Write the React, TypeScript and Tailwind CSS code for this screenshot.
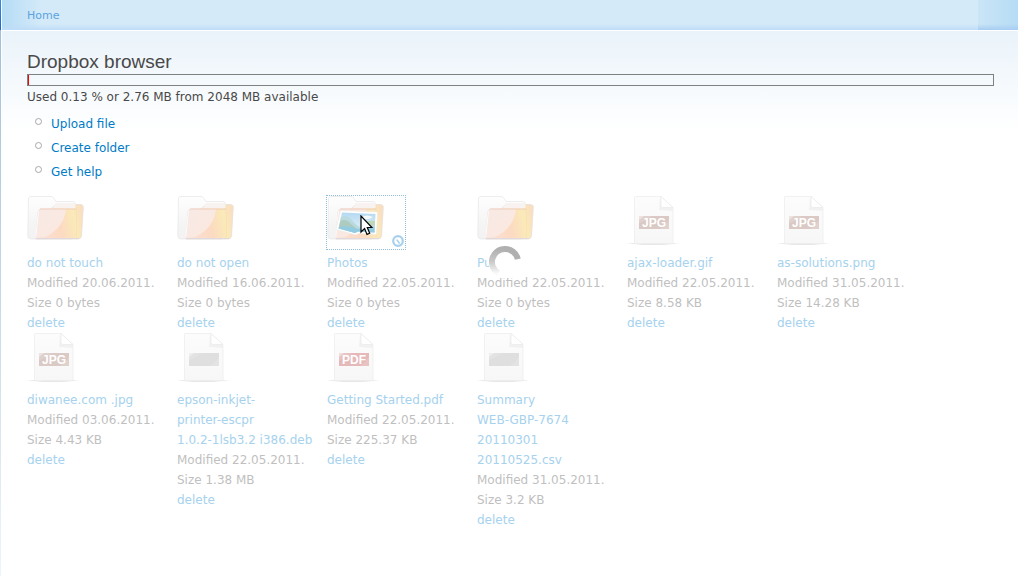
import type { ReactNode } from 'react';

type Kind = 'folder' | 'photos' | 'jpg' | 'pdf' | 'blank';

interface Entry {
  name: string[];
  kind: Kind;
  modified: string;
  size: string;
}

const entries: Entry[] = [
  { name: ['do not touch'], kind: 'folder', modified: '20.06.2011.', size: '0 bytes' },
  { name: ['do not open'], kind: 'folder', modified: '16.06.2011.', size: '0 bytes' },
  { name: ['Photos'], kind: 'photos', modified: '22.05.2011.', size: '0 bytes' },
  { name: ['Public'], kind: 'folder', modified: '22.05.2011.', size: '0 bytes' },
  { name: ['ajax-loader.gif'], kind: 'jpg', modified: '22.05.2011.', size: '8.58 KB' },
  { name: ['as-solutions.png'], kind: 'jpg', modified: '31.05.2011.', size: '14.28 KB' },
  { name: ['diwanee.com .jpg'], kind: 'jpg', modified: '03.06.2011.', size: '4.43 KB' },
  { name: ['epson-inkjet-', 'printer-escpr', '1.0.2-1lsb3.2 i386.deb'], kind: 'blank', modified: '22.05.2011.', size: '1.38 MB' },
  { name: ['Getting Started.pdf'], kind: 'pdf', modified: '22.05.2011.', size: '225.37 KB' },
  { name: ['Summary', 'WEB-GBP-7674', '20110301', '20110525.csv'], kind: 'blank', modified: '31.05.2011.', size: '3.2 KB' },
];

const Gradients = () => (
  <svg className="absolute" width="0" height="0" aria-hidden="true">
    <defs>
      <linearGradient id="folderBack" x1="0" y1="0" x2="0" y2="1">
        <stop offset="0" stopColor="#fefefe" />
        <stop offset="0.7" stopColor="#f4f4f4" />
        <stop offset="1" stopColor="#f4f2f2" />
      </linearGradient>
      <linearGradient id="folderFront" gradientUnits="userSpaceOnUse" x1="10" y1="34" x2="56" y2="24">
        <stop offset="0" stopColor="#fbe0d6" />
        <stop offset="0.5" stopColor="#fcdac2" />
        <stop offset="0.82" stopColor="#faeab8" />
        <stop offset="1" stopColor="#f9dfc0" />
      </linearGradient>
      <linearGradient id="folderGloss" gradientUnits="userSpaceOnUse" x1="10" y1="13" x2="34" y2="36">
        <stop offset="0" stopColor="#f7e9e5" />
        <stop offset="1" stopColor="#fbe9e0" />
      </linearGradient>
      <linearGradient id="sky" x1="0" y1="0" x2="0" y2="1">
        <stop offset="0" stopColor="#b4d9f2" />
        <stop offset="1" stopColor="#e8f4f8" />
      </linearGradient>
      <linearGradient id="paper" x1="0" y1="0" x2="0" y2="1">
        <stop offset="0" stopColor="#fcfcfc" />
        <stop offset="1" stopColor="#f7f7f7" />
      </linearGradient>
      <radialGradient id="paperShadow">
        <stop offset="0" stopColor="#d8d8d8" />
        <stop offset="0.75" stopColor="#e9e9e9" />
        <stop offset="1" stopColor="#ffffff" />
      </radialGradient>
    </defs>
  </svg>
);

const FolderIcon = ({ photo = false }: { photo?: boolean }) => (
  <svg width="60" height="50" viewBox="0 0 60 50" aria-hidden="true">
    <path d="M1.5 3Q1.5 0.5 4 0.5H24Q26 0.5 27 2.5L29 5.5H46Q48.5 5.5 48.5 8.5V14L45 43H4Q0.5 43 0.8 39Z" fill="url(#folderBack)" stroke="#e8e8e8" strokeWidth="0.8" />
    <path d="M27 10L29.5 8.5H53Q56.5 8.5 56.3 11L54.5 40Q54 43 51 43H9L11 16Q11.5 13 14 13H24Z" fill="url(#folderFront)" stroke="#e8dedb" strokeWidth="0.8" />
    <path d="M14 12.5H24Q26 12 27 10L29 7H48.5V12.5Z" fill="#f8f3f1" />
    <path d="M14 13H39Q37 32 18 41L9 42L11 16Q11.5 13 14 13Z" fill="url(#folderGloss)" />
    <path d="M13 13H49" stroke="#efc6b4" strokeWidth="0.8" />
    <path d="M49.5 9V41" stroke="#f8dcae" strokeWidth="0.6" />
    <path d="M9 42.5H52" stroke="#e0dae0" strokeWidth="1" />
    <path d="M11.5 15L8.8 41" stroke="#fffafa" strokeWidth="1" />
    {photo && (
      <g>
        <path d="M13.5 14.5L50.5 16L49.5 38.5L32 37.5L29 39L9 33.5Z" fill="#ffffff" stroke="#ece8e4" strokeWidth="0.6" />
        <path d="M15 16.5L48.5 18L47.5 36.5L31 35.5L28 37L11.5 32.5Z" fill="url(#sky)" />
        <path d="M14 21Q19 18 24 23Q29 30 34 31L48 27L47.5 36.5L31 35.5L28 37L11.5 32.5Z" fill="#b9dade" />
        <path d="M13.5 25Q19 22 24 28L30 33L12 31Z" fill="#aecbc0" />
        <path d="M35 27Q42 24 48 25V29L36 32Z" fill="#bdd8ba" />
        <path d="M12 31Q22 29 31 33L47.5 31L47.5 36.5L31 35.5L28 37L11.5 32.5Z" fill="#93cce0" />
        <path d="M35 21Q40 18 46 21Q42 24 36 23Z" fill="#f5fafb" />
      </g>
    )}
  </svg>
);

const labels: Record<string, { fill: string; text: string }> = {
  jpg: { fill: '#dac9c4', text: 'JPG' },
  pdf: { fill: '#e5b9b9', text: 'PDF' },
  blank: { fill: '#dfdfdf', text: '' },
};

const FileIcon = ({ kind }: { kind: Kind }) => (
  <svg width="56" height="50" viewBox="0 0 56 50" aria-hidden="true">
    <ellipse cx="26" cy="47.7" rx="27" ry="1.3" fill="url(#paperShadow)" />
    <path d="M8.5 0.5H34L46 11.5V47.5H7.5V1.5Q7.5 0.5 8.5 0.5Z" fill="url(#paper)" stroke="#eeeeee" strokeWidth="0.8" />
    <path d="M33 1L32 14L46 15V12Z" fill="#f1f1f1" />
    <rect x="12" y="20" width="30" height="13" fill={labels[kind].fill} />
    <path d="M8 1H34V9Q29 21 8 29Z" fill="#ffffff" opacity="0.15" />
    <path d="M12 20H17L12 24Z" fill="#ffffff" opacity="0.4" />
    <path d="M42 20V24Q38 30 33 33H42V20Z" fill="#ffffff" opacity="0.15" />
    <path d="M34 0.5L46 11.5H36Q34 11.5 34 9.5Z" fill="#ffffff" stroke="#eaeaea" strokeWidth="0.7" />
    <text x="27" y="31" textAnchor="middle" fontSize="12" fontWeight="bold" fill="#ffffff" fontFamily="Liberation Sans, sans-serif">
      {labels[kind].text}
    </text>
  </svg>
);

const Cursor = () => (
  <svg className="absolute left-[33px] top-[19px]" width="13" height="21" viewBox="0 0 13 21" aria-hidden="true">
    <path d="M1 1V17L4.6 13.6L7 19.4L9.7 18.2L7.3 12.5H12Z" fill="#ffffff" stroke="#000000" strokeWidth="1.2" />
  </svg>
);

const Throbber = () => (
  <svg className="absolute bottom-[2px] right-px" width="12" height="12" viewBox="0 0 12 12" fill="none" aria-hidden="true">
    <circle cx="6" cy="6" r="4.8" stroke="#a6d0ee" strokeWidth="2.2" />
    <path d="M4.8 4.6L7.6 8.6" stroke="#a6d0ee" strokeWidth="1.6" />
  </svg>
);

// Loading ring, sits on a white tile over the folder name
const Spinner = () => (
  <svg className="absolute left-3 top-[50px] bg-white" width="32" height="32" viewBox="0 0 32 32" fill="none" role="img" aria-label="Loading">
    <defs>
      <linearGradient id="ring" x1="0" y1="0" x2="0" y2="1">
        <stop offset="0" stopColor="#b0b0b0" />
        <stop offset="0.5" stopColor="#c8c8c8" />
        <stop offset="0.8" stopColor="#e4e4e4" />
        <stop offset="1" stopColor="#fafafa" />
      </linearGradient>
    </defs>
    <path d="M9.5 27.3A13 13 0 0 1 16 3" stroke="url(#ring)" strokeWidth="6" />
    <path d="M15.5 3A13 13 0 0 1 28.8 13.2" stroke="#b0b0b0" strokeWidth="6" />
  </svg>
);

const Tile = ({ entry, children }: { entry: Entry; children?: ReactNode }) => {
  const { name, kind, modified, size } = entry;
  const active = kind === 'photos';
  return (
    <li className="relative w-[150px] whitespace-nowrap text-[#bfbfbf]">
      <div className="h-[57px]">
        <a
          href="#"
          aria-label={name.join(' ')}
          className={active ? 'relative block h-[53px] w-[78px] outline-1 outline-dotted outline-[#8fbfdc]' : 'block w-[60px]'}
        >
          {kind === 'folder' || kind === 'photos' ? <FolderIcon photo={active} /> : <FileIcon kind={kind} />}
          {active && <Throbber />}
        </a>
      </div>
      <a href="#" className="block text-[#a6d2ee]">
        {name.map((line) => (
          <span key={line} className="block">{line}</span>
        ))}
      </a>
      <p>Modified {modified}</p>
      <p>Size {size}</p>
      <a href="#" className="text-[#a6d2ee]">delete</a>
      {children}
    </li>
  );
};

const Usage = ({ percent }: { percent: number }) => (
  <div
    role="progressbar"
    aria-label="Used space"
    aria-valuenow={percent}
    className="h-3 border border-[#7f8080]"
  >
    <div className="h-full min-w-px bg-[#ff0000]" style={{ width: `${percent}%` }} />
  </div>
);

export default function App() {
  return (
    <div className="flex min-h-screen bg-white font-['DejaVu_Sans',Verdana,sans-serif] text-xs leading-5 text-[#494949]">
      <Gradients />
      <div className="flex w-px shrink-0 flex-col">
        <div className="h-[30px] bg-linear-to-b from-[#2d91e3] to-[#1668cf]" />
        <div className="flex-1 bg-linear-to-b from-[#9fc0d8] to-[#edf5fb]" />
      </div>
      <div className="min-w-0 flex-1 border-l border-white">
        <header className="flex h-[31px] border-b border-white bg-[#d4eaf8]">
          <div className="flex flex-1 bg-linear-to-r from-[#b6dcf5] to-[#d4eaf8] to-[40px]">
            <nav className="flex flex-1 items-center bg-linear-to-t from-[#bfdcf8] to-transparent to-[6px] pl-[25px] pt-0.5">
              <a href="#" className="text-[11px] text-[#5ba3e0]">Home</a>
            </nav>
            <div className="w-10 bg-linear-to-r from-[#cae5f6] to-[#b6dcf5]">
              <div className="h-full bg-linear-to-t from-[#a8cdf3] to-transparent to-[6px]" />
            </div>
          </div>
        </header>
        <main className="bg-linear-to-b from-[#eaf3fa] to-white to-[100px] pb-10 pl-[25px] pr-6 pt-[19px]">
          <h1 className="font-['Liberation_Sans',Arial,sans-serif] text-[19px] leading-6">Dropbox browser</h1>
          <Usage percent={0.1} />
          <p className="pt-px">Used 0.13 % or 2.76 MB from 2048 MB available</p>
          <ul className="mt-[5px] pl-2 leading-6">
            {['Upload file', 'Create folder', 'Get help'].map((label) => (
              <li key={label} className="flex items-start gap-[9px]">
                <span className="mt-[6px] size-[7px] rounded-full border border-[#a8a8a8]" />
                <a href="#" className="text-[#007bc8]">{label}</a>
              </li>
            ))}
          </ul>
          <ul className="mt-3 flex flex-wrap">
            {entries.map((entry) => (
              <Tile key={entry.name[0]} entry={entry}>
                {entry.kind === 'photos' && <Cursor />}
                {entry.name[0] === 'Public' && <Spinner />}
              </Tile>
            ))}
          </ul>
        </main>
      </div>
    </div>
  );
}
